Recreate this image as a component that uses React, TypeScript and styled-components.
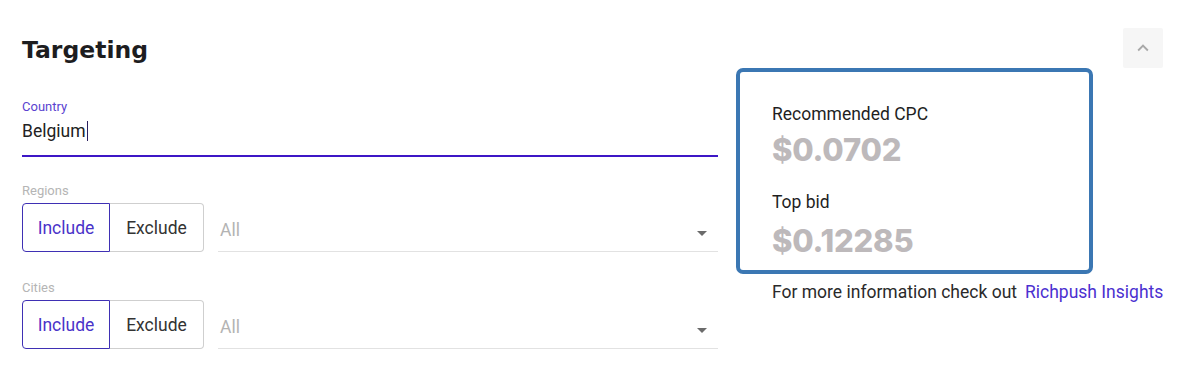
import React from 'react'
import styled, { createGlobalStyle } from 'styled-components'

const COLORS = {
  purple: '#3d17c6',
  purpleText: '#4a33c9',
  label: '#b5b5b5',
  text: '#222222',
  muted: '#b3b3b3',
  amount: '#bdb9bb',
  cardBorder: '#3b77b3',
  line: '#e2e2e2',
}

const GlobalStyle = createGlobalStyle`
  html, body {
    margin: 0;
    padding: 0;
    background: #ffffff;
  }
  body {
    font-family: Roboto, 'Liberation Sans', Arial, sans-serif;
    color: ${COLORS.text};
  }
`

const Page = styled.div`
  display: grid;
  grid-template-columns: 696px 1fr;
  column-gap: 18px;
  padding: 28px 39px 0 22px;
  width: 1201px;
  box-sizing: border-box;
`

const LeftColumn = styled.div`
  display: flex;
  flex-direction: column;
`

const RightColumn = styled.div`
  display: flex;
  flex-direction: column;
  align-items: flex-start;
`

const Title = styled.h2`
  margin: 0;
  height: 41px;
  line-height: 44px;
  font-family: 'DejaVu Sans', Inter, sans-serif;
  font-weight: 700;
  font-size: 23.5px;
  color: #1d1d1f;
`

const Field = styled.div<{ $top: number }>`
  display: flex;
  flex-direction: column;
  margin-top: ${p => p.$top}px;
`

const Label = styled.label<{ $active?: boolean }>`
  font-size: 13px;
  line-height: 14px;
  color: ${p => (p.$active ? '#5a43d0' : COLORS.label)};
`

const TextValue = styled.div`
  margin-top: 5px;
  height: 36px;
  line-height: 24px;
  font-size: 17.5px;
  color: #222;
  border-bottom: 2px solid ${COLORS.purple};
`

const Caret = styled.span`
  display: inline-block;
  width: 1px;
  height: 20px;
  margin-left: 1px;
  vertical-align: -4px;
  background: #2a1f5e;
`

const FilterRow = styled.div`
  display: flex;
  align-items: stretch;
  gap: 14px;
  margin-top: 5px;
`

const ToggleGroup = styled.div`
  display: flex;
  height: 49px;
`

const Toggle = styled.button<{ $selected?: boolean; $first?: boolean }>`
  box-sizing: border-box;
  height: 49px;
  padding: 0;
  font-family: Roboto, 'Liberation Sans', sans-serif;
  font-size: 17.5px;
  background: #fff;
  cursor: pointer;
  color: ${p => (p.$selected ? COLORS.purpleText : '#333')};
  border: 1px solid ${p => (p.$selected ? '#3f30b4' : '#cfcfcf')};
  border-radius: ${p => (p.$first ? '4px 0 0 4px' : '0 4px 4px 0')};
  ${p => (p.$first ? 'width: 88px;' : 'width: 94px; border-left: none;')}
`

const Select = styled.div`
  flex: 1;
  display: flex;
  align-items: flex-end;
  justify-content: space-between;
  box-sizing: border-box;
  border-bottom: 1px solid ${COLORS.line};
  padding: 0 4px 9px 2px;
`

const Placeholder = styled.span`
  font-size: 17.5px;
  line-height: 24px;
  color: ${COLORS.muted};
`

const ArrowIcon = styled.svg`
  width: 24px;
  height: 24px;
  margin-bottom: -3px;
  fill: #6b6b6b;
`

const CollapseButton = styled.button`
  align-self: flex-end;
  width: 40px;
  height: 40px;
  border: none;
  border-radius: 2px;
  background: #f6f6f6;
  display: flex;
  align-items: center;
  justify-content: center;
  padding: 0;
  cursor: pointer;
  svg {
    width: 22px;
    height: 22px;
    fill: #a8a8a8;
  }
`

const Card = styled.div`
  box-sizing: border-box;
  width: 357px;
  height: 206px;
  border: 4px solid ${COLORS.cardBorder};
  border-radius: 7px;
  padding: 31px 32px 0;
  display: flex;
  flex-direction: column;
`

const StatLabel = styled.div<{ $top?: number }>`
  font-size: 17.5px;
  font-weight: 400;
  line-height: 22px;
  color: #1f1f1f;
  margin-top: ${p => p.$top ?? 0}px;
`

const StatValue = styled.div<{ $top?: number }>`
  margin-top: ${p => p.$top ?? 7}px;
  font-family: Inter, 'DejaVu Sans', sans-serif;
  font-weight: 800;
  font-size: 31px;
  line-height: 36px;
  letter-spacing: -0.2px;
  color: ${COLORS.amount};
`

const Info = styled.p`
  margin: 6px 0 0 36px;
  font-size: 17.5px;
  line-height: 24px;
  white-space: nowrap;
  color: #2a2a2a;
`

const InsightsLink = styled.a`
  margin-left: 8px;
  color: #4b30d0;
  text-decoration: none;
`

const FilterField = ({ label, top }: { label: string; top: number }) => (
  <Field $top={top}>
    <Label>{label}</Label>
    <FilterRow>
      <ToggleGroup>
        <Toggle $first $selected>
          Include
        </Toggle>
        <Toggle>Exclude</Toggle>
      </ToggleGroup>
      <Select>
        <Placeholder>All</Placeholder>
        <ArrowIcon viewBox="0 0 24 24">
          <path d="M7 10l5 5 5-5z" />
        </ArrowIcon>
      </Select>
    </FilterRow>
  </Field>
)

export default function App() {
  return (
    <>
      <GlobalStyle />
      <Page>
        <LeftColumn>
          <Title>Targeting</Title>
          <Field $top={31}>
            <Label $active>Country</Label>
            <TextValue>
              Belgium
              <Caret />
            </TextValue>
          </Field>
          <FilterField label="Regions" top={27} />
          <FilterField label="Cities" top={29} />
        </LeftColumn>
        <RightColumn>
          <CollapseButton aria-label="Collapse">
            <svg viewBox="0 0 24 24">
              <path d="M7.41 15.41L12 10.83l4.59 4.58L18 14l-6-6-6 6z" />
            </svg>
          </CollapseButton>
          <Card>
            <StatLabel>Recommended CPC</StatLabel>
            <StatValue>$0.0702</StatValue>
            <StatLabel $top={23}>Top bid</StatLabel>
            <StatValue $top={10}>$0.12285</StatValue>
          </Card>
          <Info>
            For more information check out
            <InsightsLink href="#">Richpush Insights</InsightsLink>
          </Info>
        </RightColumn>
      </Page>
    </>
  )
}
